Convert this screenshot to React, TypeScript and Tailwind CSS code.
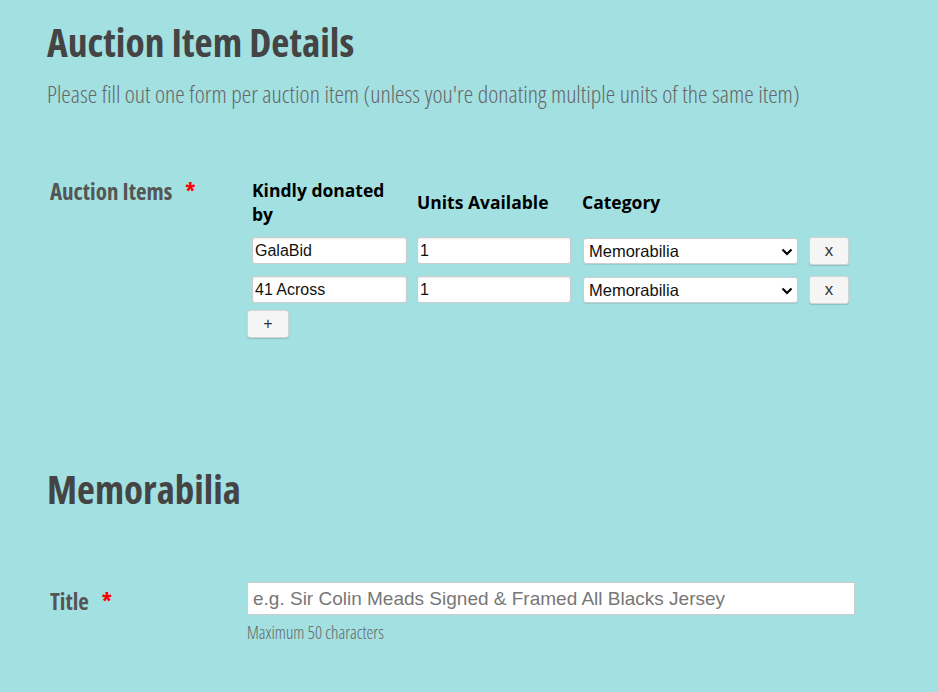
import React from 'react'

const cond = "font-['Open_Sans',sans-serif] font-stretch-condensed"
const arial = "font-['Liberation_Sans',Arial,sans-serif]"

const rows = [
  { donor: 'GalaBid', units: '1', category: 'Memorabilia' },
  { donor: '41 Across', units: '1', category: 'Memorabilia' },
]

function Star() {
  return <span className="text-[#ff0000] ml-[13px] font-['Open_Sans',sans-serif] font-bold">*</span>
}

const inputCls = `h-[27px] bg-white border border-[#ccc] rounded-[3px] px-[2px] ${arial} text-[16px] text-[#111] shadow-[inset_0_1px_2px_rgba(0,0,0,0.08)] outline-none`
const btnCls = `bg-[#f5f5f5] border border-[#d3d3d3] rounded-[3px] shadow-[0_1px_1px_rgba(0,0,0,0.15)] ${arial} text-[#333] leading-none`

export default function App() {
  return (
    <div className="min-h-[692px] w-full bg-[#a2e0e1] pl-[47px] pt-[16px]">
      {/* Header */}
      <h1 className={`${cond} text-[39.5px] font-bold text-[#444] leading-[52px]`}>Auction Item Details</h1>
      <p className={`${cond} text-[24px] font-light text-[#666] mt-[10px] leading-[32px]`}>
        Please fill out one form per auction item (unless you're donating multiple units of the same item)
      </p>

      {/* Auction items */}
      <div className="flex mt-[67px]">
        <div className={`${cond} w-[205px] pl-[3px] text-[23px] font-bold text-[#555] leading-[28px]`}>
          Auction Items<Star />
        </div>
        <div className="pt-[2px]">
          <div className="flex items-center font-['Open_Sans',sans-serif] text-[17.5px] font-bold text-black leading-[23.5px]">
            <div className="w-[165px]">Kindly donated<br />by</div>
            <div className="w-[165px]">Units Available</div>
            <div className="w-[200px]">Category</div>
          </div>
          <div className="flex flex-col gap-[12px] mt-[11px]">
            {rows.map((r, i) => (
              <div key={i} className="flex items-center h-[27px]">
                <input defaultValue={r.donor} className={`w-[155px] ${inputCls}`} />
                <input defaultValue={r.units} className={`w-[154px] ml-[10px] ${inputCls}`} />
                <div className="relative w-[215px] h-[26px] ml-[12px]">
                  <select
                    defaultValue={r.category}
                    className={`appearance-none w-full h-full bg-white border border-[#ccc] rounded-[3px] pl-[5px] ${arial} text-[16.5px] text-[#111] shadow-[0_1px_1px_rgba(0,0,0,0.08)] outline-none`}
                  >
                    <option>Memorabilia</option>
                    <option>Experiences</option>
                    <option>Other</option>
                  </select>
                  <svg className="absolute right-[5px] top-[10px] pointer-events-none" width="12" height="8" viewBox="0 0 12 8">
                    <path d="M1.5 1.5 L6 6 L10.5 1.5" stroke="#000" strokeWidth="2.2" fill="none" />
                  </svg>
                </div>
                <button className={`w-[40px] h-[28px] ml-[11px] text-[17px] ${btnCls}`}>x</button>
              </div>
            ))}
          </div>
          <button className={`-ml-[5px] mt-[7px] w-[42px] h-[28px] text-[16px] ${btnCls}`}>+</button>
        </div>
      </div>

      {/* Memorabilia */}
      <h2 className={`${cond} text-[39px] font-bold text-[#444] leading-[52px] mt-[125px]`}>Memorabilia</h2>

      <div className="flex mt-[67px]">
        <div className={`${cond} w-[200px] pl-[3px] pt-[5px] text-[23px] font-bold text-[#555] leading-[28px]`}>
          Title<Star />
        </div>
        <div>
          <input
            placeholder="e.g. Sir Colin Meads Signed & Framed All Blacks Jersey"
            className={`w-[608px] h-[33px] bg-white border border-[#ccc] px-[5px] ${arial} text-[19px] text-black placeholder:text-[#777] outline-none`}
          />
          <p className={`${cond} text-[17.5px] font-light text-[#666] mt-[6px] leading-[22px]`}>Maximum 50 characters</p>
        </div>
      </div>
    </div>
  )
}
